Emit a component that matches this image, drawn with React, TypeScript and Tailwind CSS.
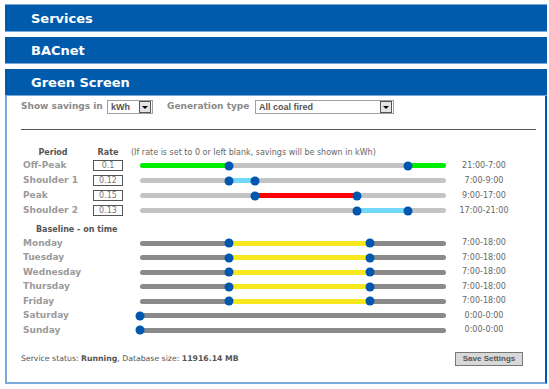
import React from 'react';

const font = { fontFamily: '"DejaVu Sans", Verdana, sans-serif' };

interface Period {
    name: string;
    rate: string;
    from: number;
    to: number;
    color: string;
    time: string;
}

const periods: Period[] = [
    { name: 'Off-Peak', rate: '0.1', from: 21, to: 7, color: 'bg-[#00ee00]', time: '21:00-7:00' },
    { name: 'Shoulder 1', rate: '0.12', from: 7, to: 9, color: 'bg-[#74d8f8]', time: '7:00-9:00' },
    { name: 'Peak', rate: '0.15', from: 9, to: 17, color: 'bg-[#ff0000]', time: '9:00-17:00' },
    { name: 'Shoulder 2', rate: '0.13', from: 17, to: 21, color: 'bg-[#74d8f8]', time: '17:00-21:00' },
];

const days = [
    { name: 'Monday', from: 7, to: 18 },
    { name: 'Tuesday', from: 7, to: 18 },
    { name: 'Wednesday', from: 7, to: 18 },
    { name: 'Thursday', from: 7, to: 18 },
    { name: 'Friday', from: 7, to: 18 },
    { name: 'Saturday', from: 0, to: 0 },
    { name: 'Sunday', from: 0, to: 0 },
];

const pct = (h: number) => `${(h / 24) * 100}%`;
const fmt = (h: number) => `${h}:00`;

function Handle({ at }: { at: number }) {
    return (
        <div
            className="absolute top-1/2 h-[9px] w-[9px] -translate-x-1/2 -translate-y-1/2 rounded-full bg-[#0057b0]"
            style={{ left: pct(at) }}
        />
    );
}

function Slider({ from, to, track, fill }: { from: number; to: number; track: string; fill: string }) {
    const wraps = from > to;
    return (
        <div className={`relative h-[5px] w-[306px] rounded-full ${track}`}>
            {wraps ? (
                <>
                    <div className={`absolute left-0 top-0 h-full rounded-l-full ${fill}`} style={{ width: pct(to) }} />
                    <div className={`absolute right-0 top-0 h-full rounded-r-full ${fill}`} style={{ width: pct(24 - from) }} />
                </>
            ) : (
                <div className={`absolute top-0 h-full ${fill}`} style={{ left: pct(from), width: pct(to - from) }} />
            )}
            <Handle at={from} />
            {from !== to && <Handle at={to} />}
        </div>
    );
}

function FakeSelect({ value, width }: { value: string; width: string }) {
    return (
        <div className={`flex h-[14px] items-center border border-[#a0a0a0] bg-white ${width}`}>
            <span className="flex-1 pl-[3px] text-[9px] leading-none text-[#555]" style={{ fontFamily: '"Liberation Sans", Arial, sans-serif' }}>
                {value}
            </span>
            <div className="mr-[1px] flex h-[12px] w-[12px] items-center justify-center border border-[#555] bg-[#e4e4e4]">
                <div className="h-0 w-0 border-x-[3px] border-t-[3px] border-x-transparent border-t-black" />
            </div>
        </div>
    );
}

function Bar({ title, last }: { title: string; last?: boolean }) {
    return (
        <div
            className={`h-[27px] border-b border-[#7aaadd] bg-[#005bac] pl-[26px] pt-[7px] text-[13px] font-bold leading-none text-white ${last ? '' : 'mb-[5px]'}`}
        >
            {title}
        </div>
    );
}

export default function App() {
    return (
        <div className="h-[389px] w-[549px] bg-white pl-[5px] pt-[4px]" style={font}>
            <div className="w-[542px] border-t border-[#7aaadd]">
                <Bar title="Services" />
                <Bar title="BACnet" />
                <Bar title="Green Screen" last />

                {/* Content */}
                <div className="h-[288px] border-b-[2px] border-l-[2px] border-r-[2px] border-b-[#7aaadd] border-l-[#7aaadd] border-r-[#0057b0] pl-[14px] pr-[8px] pt-[4px]">
                    <div className="flex items-center text-[9px] font-bold text-[#8a8a8a]">
                        <span className="w-[86px]">Show savings in</span>
                        <FakeSelect value="kWh" width="w-[46px]" />
                        <span className="ml-[14px] w-[88px]">Generation type</span>
                        <FakeSelect value="All coal fired" width="w-[139px]" />
                    </div>

                    <div className="mt-[15px] h-px w-[515px] bg-[#555]" />

                    {/* Periods */}
                    <div className="mt-[18px] flex h-[10px] items-center text-[8px]">
                        <span className="w-[64px] text-center font-bold text-[#555]">Period</span>
                        <span className="w-[46px] text-center font-bold text-[#555]">Rate</span>
                        <span className="text-[#666]">(If rate is set to 0 or left blank, savings will be shown in kWh)</span>
                    </div>
                    {periods.map((p) => (
                        <div key={p.name} className="flex h-[15px] items-center">
                            <span className="w-[72px] pl-[2px] text-[9px] font-bold text-[#9a9a9a]">{p.name}</span>
                            <div className="flex h-[11px] w-[30px] items-center justify-center border border-[#555] text-[8px] text-[#777]">
                                {p.rate}
                            </div>
                            <div className="ml-[17px]">
                                <Slider from={p.from} to={p.to} track="bg-[#c4c4c4]" fill={p.color} />
                            </div>
                            <span className="w-[76px] text-center text-[8px] text-[#666]">{p.time}</span>
                        </div>
                    ))}

                    {/* Baseline */}
                    <div className="mt-[6px] h-[12px] pl-[15px] text-[8px] font-bold leading-[12px] text-[#555]">Baseline - on time</div>
                    {days.map((d) => (
                        <div key={d.name} className="flex h-[14.5px] items-center">
                            <span className="w-[119px] pl-[2px] text-[9px] font-bold text-[#9a9a9a]">{d.name}</span>
                            <Slider from={d.from} to={d.to} track="bg-[#8a8a8a]" fill="bg-[#f8e81e]" />
                            <span className="w-[76px] text-center text-[8px] text-[#666]">
                                {fmt(d.from)}-{fmt(d.to)}
                            </span>
                        </div>
                    ))}

                    {/* Footer */}
                    <div className="mt-[14px] flex items-center justify-between pr-[14px]">
                        <span className="text-[7.75px] text-[#555]">
                            Service status: <b>Running</b>, Database size: <b>11916.14 MB</b>
                        </span>
                        <button
                            className="h-[14px] w-[68px] border border-[#777] bg-[#d8d8d8] text-[8px] font-bold leading-none text-[#555]"
                            style={{ fontFamily: '"Liberation Sans", Arial, sans-serif' }}
                        >
                            Save Settings
                        </button>
                    </div>
                </div>
            </div>
        </div>
    );
}
